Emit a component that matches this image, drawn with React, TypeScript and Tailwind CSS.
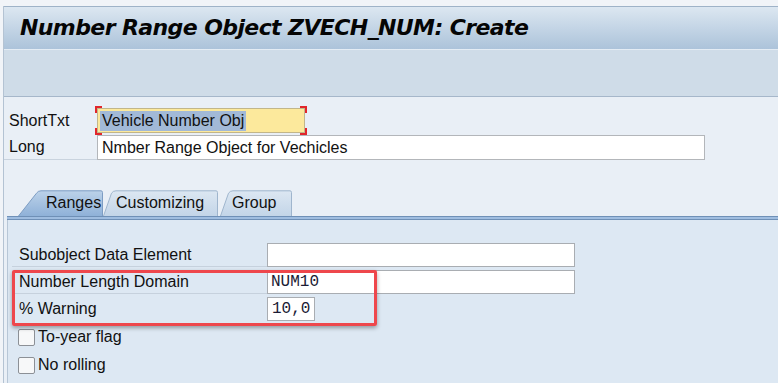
import React from "react";

function Tab({
  width,
  slant,
  active,
  label,
  pl,
}: {
  width: number;
  slant: number;
  active?: boolean;
  label: string;
  pl: number;
}) {
  const h = 26;
  const d = `M0.5 ${h} L${slant - 1.5} 3.2 Q${slant} 0.8 ${slant + 3} 0.8 L${width - 2} 0.8 Q${width - 0.5} 0.8 ${width - 0.5} 2.5 L${width - 0.5} ${h}`;
  const gid = active ? "tabA" : "tabI";
  return (
    <div className="relative h-[26px] flex items-center" style={{ width }}>
      <svg className="absolute inset-0" width={width} height={h} viewBox={`0 0 ${width} ${h}`}>
        <defs>
          <linearGradient id="tabA" x1="0" y1="0" x2="0" y2="1">
            <stop offset="0" stopColor="#bcd2e9" />
            <stop offset="1" stopColor="#8fb1d8" />
          </linearGradient>
          <linearGradient id="tabI" x1="0" y1="0" x2="0" y2="1">
            <stop offset="0" stopColor="#dce7f2" />
            <stop offset="1" stopColor="#c3d5e8" />
          </linearGradient>
        </defs>
        <path d={d} fill={`url(#${gid})`} stroke={active ? "#7d9dc3" : "#9fb5cd"} strokeWidth="1" />
      </svg>
      <span className="relative text-[16px] text-[#111]" style={{ paddingLeft: pl }}>
        {label}
      </span>
    </div>
  );
}

export default function App() {
  return (
    <div className="w-[778px] h-[383px] overflow-hidden bg-[#f1f4f8] flex flex-col font-['Liberation_Sans',Arial,sans-serif] text-[16px] text-[#111]">
      <div className="h-[6px] shrink-0" />
      <div className="ml-[3px] flex-1 flex flex-col border-l border-[#b4c3d3] min-h-0">
        {/* title bar */}
        <div className="h-[43px] shrink-0 border-t border-[#9fb3c8] bg-gradient-to-b from-[#dce7f1] to-[#acc3da] flex items-center pl-[16px] pb-[1px]">
          <h1 className="font-['DejaVu_Sans',sans-serif] font-bold italic text-[22px] leading-none text-[#050505] tracking-[-0.6px]">
            Number Range Object ZVECH_NUM: Create
          </h1>
        </div>
        <div className="h-px shrink-0 bg-[#e4ecf4]" />
        {/* toolbar */}
        <div className="h-[47px] shrink-0 bg-[#cfdce8] border-b border-[#a6b7ca]" />

        {/* content */}
        <div className="flex-1 bg-[#e9eff6] flex flex-col pt-[11px] min-h-0">
          <div className="flex h-[25px] items-center">
            <div className="w-[93px] pl-[5px]">ShortTxt</div>
            <div className="relative">
              <div className="w-[208px] h-[25px] bg-[#fce99c] border border-[#c2b68a] flex items-center pl-[2px]">
                <span className="bg-[#a2b9d7] px-[2px] h-[20px] flex items-center">Vehicle Number Obj</span>
              </div>
              <span className="absolute -top-[2px] -left-[2px] w-[7px] h-[7px] border-t-2 border-l-2 border-[#e1262b]" />
              <span className="absolute -top-[2px] -right-[2px] w-[7px] h-[7px] border-t-2 border-r-2 border-[#e1262b]" />
              <span className="absolute -bottom-[2px] -left-[2px] w-[7px] h-[7px] border-b-2 border-l-2 border-[#e1262b]" />
              <span className="absolute -bottom-[2px] -right-[2px] w-[7px] h-[7px] border-b-2 border-r-2 border-[#e1262b]" />
            </div>
          </div>
          <div className="flex h-[25px] mt-[2px]">
            <div className="w-[93px] pl-[5px] flex items-center border-b border-[#c9d3de]">Long</div>
            <div className="w-[608px] h-[25px] bg-white border border-[#b3b6ba] flex items-center pl-[4px]">
              Nmber Range Object for Vechicles
            </div>
          </div>

          {/* tabs */}
          <div className="ml-[3px] mt-[30px] flex flex-col flex-1 min-h-0">
            <div className="flex h-[26px] items-end pl-[11px] shrink-0">
              <Tab width={85} slant={20} active label="Ranges" pl={28} />
              <Tab width={115} slant={10} label="Customizing" pl={13} />
              <div className="w-[2px]" />
              <Tab width={72} slant={10} label="Group" pl={12} />
            </div>
            <div className="h-[4px] shrink-0 border-t border-b border-[#6f90b7] bg-[#9fbde0]" />
            <div className="relative flex-1 bg-[#dde8f3] border-l border-[#b7c6d6] pt-[23px] pl-[4px]">
              <div className="flex h-[24px]">
                <div className="w-[255px] pl-[7px] flex items-center border-b border-[#c6d1dd]">Subobject Data Element</div>
                <div className="w-[308px] h-[24px] bg-white border border-[#a9adb2]" />
              </div>
              <div className="flex h-[24px] mt-[3px]">
                <div className="w-[255px] pl-[7px] flex items-center border-b border-[#c6d1dd]">Number Length Domain</div>
                <div className="w-[308px] h-[24px] bg-white border border-[#a9adb2] flex items-center pl-[3px] font-['Liberation_Mono',monospace] text-[#1b1b35]">
                  NUM10
                </div>
              </div>
              <div className="flex h-[24px] mt-[3px]">
                <div className="w-[255px] pl-[7px] flex items-center">% Warning</div>
                <div className="w-[48px] h-[24px] bg-white border border-[#a9adb2] flex items-center pl-[4px] font-['Liberation_Mono',monospace] text-[#1b1b35]">
                  10,0
                </div>
              </div>
              <div className="flex flex-col gap-[4px] mt-[4px]">
                <div className="flex h-[24px] items-center pl-[6px]">
                  <span className="w-[17px] h-[17px] rounded-[2px] border border-[#8c9096] bg-[#f7f8f9]" />
                  <span className="ml-[3px]">To-year flag</span>
                </div>
                <div className="flex h-[24px] items-center pl-[6px]">
                  <span className="w-[17px] h-[17px] rounded-[2px] border border-[#8c9096] bg-[#f7f8f9]" />
                  <span className="ml-[3px]">No rolling</span>
                </div>
              </div>
              {/* highlight box */}
              <div className="absolute left-[4px] top-[50px] w-[365px] h-[56px] border-[3px] border-[#ee474c] rounded-[2px] shadow-[0_2px_4px_rgba(0,0,0,0.35)]" />
            </div>
          </div>
        </div>
      </div>
    </div>
  );
}
